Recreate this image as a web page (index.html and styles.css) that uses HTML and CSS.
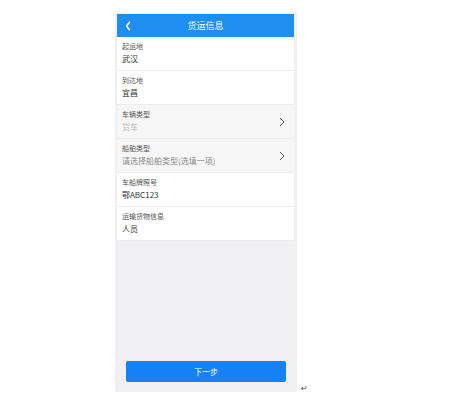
FILE: index.html
```html
<!DOCTYPE html>
<html lang="zh">
<head>
<meta charset="utf-8">
<link rel="stylesheet" href="styles.css">
</head>
<body>
<div class="page">
  <div class="phone">
    <div class="header">
      <svg class="back" viewBox="0 0 6 10" width="6" height="10"><path d="M4.5 1.2 L1.5 5 L4.5 8.8" fill="none" stroke="#fff" stroke-width="1.6" stroke-linecap="round" stroke-linejoin="round"/></svg>
      <span class="title">货运信息</span>
    </div>
    <div class="list">
      <div class="row">
        <div class="texts"><div class="label">起运地</div><div class="value">武汉</div></div>
      </div>
      <div class="row">
        <div class="texts"><div class="label">到达地</div><div class="value">宜昌</div></div>
      </div>
      <div class="row alt">
        <div class="texts"><div class="label">车辆类型</div><div class="value ph">货车</div></div>
        <svg class="chev" viewBox="0 0 6 10" width="6" height="10"><path d="M1 1 L5 5 L1 9" fill="none" stroke="#555" stroke-width="1"/></svg>
      </div>
      <div class="row alt">
        <div class="texts"><div class="label">船舶类型</div><div class="value ph2">请选择船舶类型(选填一项)</div></div>
        <svg class="chev" viewBox="0 0 6 10" width="6" height="10"><path d="M1 1 L5 5 L1 9" fill="none" stroke="#555" stroke-width="1"/></svg>
      </div>
      <div class="row">
        <div class="texts"><div class="label">车船牌照号</div><div class="value">鄂ABC123</div></div>
      </div>
      <div class="row">
        <div class="texts"><div class="label">运输货物信息</div><div class="value">人员</div></div>
      </div>
    </div>
    <div class="spacer"></div>
    <div class="btn">下一步</div>
  </div>
  <div class="mark">↵</div>
</div>
</body>
</html>
```
FILE: styles.css
```css
html, body {
  margin: 0;
  padding: 0;
  background: #fff;
  font-family: "Noto Sans CJK SC", "Noto Sans", sans-serif;
}
.page {
  display: flex;
  align-items: flex-end;
  padding: 13px 0 0 115px;
}
.phone {
  width: 182px;
  height: 379px;
  background: #f0f0f3;
  display: flex;
  flex-direction: column;
  padding: 1px 3px 0 2px;
  box-sizing: border-box;
}
.header {
  height: 23px;
  background: #1e8ef0;
  display: flex;
  align-items: center;
  justify-content: center;
  position: relative;
}
.back {
  position: absolute;
  left: 8px;
  top: 7px;
}
.title {
  color: #fff;
  font-size: 9px;
  line-height: 12px;
}
.list {
  display: flex;
  flex-direction: column;
}
.row {
  height: 34px;
  box-sizing: border-box;
  background: #fff;
  border-bottom: 1px solid #ececee;
  display: flex;
  align-items: flex-start;
  justify-content: space-between;
  padding: 4px 9px 0 5px;
}
.row.alt {
  background: #f6f6f7;
}
.label {
  font-size: 7px;
  line-height: 10px;
  color: #555;
}
.value {
  font-size: 8px;
  line-height: 12px;
  margin-top: 2px;
  color: #333;
}
.value.ph {
  color: #b8b8b8;
}
.value.ph2 {
  color: #8a8a8a;
}
.chev {
  margin-top: 8px;
}
.spacer {
  flex: 1;
}
.btn {
  margin: 0 8px 10px 9px;
  height: 21px;
  background: #1581f4;
  border-radius: 2px;
  color: #fff;
  font-size: 8px;
  display: flex;
  align-items: center;
  justify-content: center;
}
.mark {
  font-family: "DejaVu Sans", sans-serif;
  font-size: 8px;
  line-height: 8px;
  color: #444;
  margin: 0 0 -1px 4px;
}
```
